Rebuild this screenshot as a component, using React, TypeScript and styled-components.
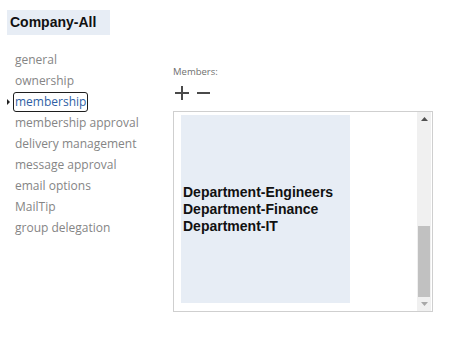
import styled, { createGlobalStyle } from "styled-components";

const navItems = [
  "general",
  "ownership",
  "membership",
  "membership approval",
  "delivery management",
  "message approval",
  "email options",
  "MailTip",
  "group delegation",
];

const members = ["Department-Engineers", "Department-Finance", "Department-IT"];

const GlobalStyle = createGlobalStyle`
  body {
    margin: 0;
    background: #ffffff;
    font-family: "Open Sans", "Noto Sans", sans-serif;
  }
`;

function App() {
  return (
    <>
      <GlobalStyle />
      <Page>
        <Title>Company-All</Title>
        <Body>
          <Nav>
            {navItems.map((item) => (
              <NavItem key={item} active={item === "membership"}>
                <NavLabel active={item === "membership"}>{item}</NavLabel>
              </NavItem>
            ))}
          </Nav>
          <Panel>
            <FieldLabel>Members:</FieldLabel>
            <Toolbar>
              <ToolButton aria-label="add">
                <svg width="14" height="14" viewBox="0 0 14 14">
                  <path d="M7 0v14M0 7h14" stroke="#4a4a4a" strokeWidth="2" />
                </svg>
              </ToolButton>
              <ToolButton aria-label="remove">
                <svg width="13" height="14" viewBox="0 0 13 14">
                  <path d="M0 7h13" stroke="#4a4a4a" strokeWidth="2" />
                </svg>
              </ToolButton>
            </Toolbar>
            <ListBox>
              <ListArea>
                <Selection>
                  {members.map((m) => (
                    <Member key={m}>{m}</Member>
                  ))}
                </Selection>
              </ListArea>
              <ScrollBar>
                <ScrollArrow>
                  <svg width="7" height="4" viewBox="0 0 7 4">
                    <path d="M0 4L3.5 0L7 4Z" fill="#505050" />
                  </svg>
                </ScrollArrow>
                <Track>
                  <Thumb />
                </Track>
                <ScrollArrow>
                  <svg width="7" height="4" viewBox="0 0 7 4">
                    <path d="M0 0L3.5 4L7 0Z" fill="#a8a8a8" />
                  </svg>
                </ScrollArrow>
              </ScrollBar>
            </ListBox>
          </Panel>
        </Body>
      </Page>
    </>
  );
}

const Page = styled.div`
  width: 474px;
  height: 342px;
  padding-top: 10px;
  box-sizing: border-box;
`;

const Title = styled.div`
  margin-left: 7px;
  width: 103px;
  height: 25px;
  padding-left: 3px;
  box-sizing: border-box;
  background-color: #e7edf5;
  font-family: "Liberation Sans", Arial, sans-serif;
  font-weight: bold;
  font-size: 14px;
  line-height: 25px;
  color: #111;
`;

const Body = styled.div`
  display: flex;
  margin-top: 14px;
`;

const Nav = styled.ul`
  list-style: none;
  margin: 0;
  padding: 0;
  width: 173px;
`;

const NavItem = styled.li<{ active: boolean }>`
  position: relative;
  height: 21px;
  display: flex;
  align-items: center;
  padding-left: ${(p) => (p.active ? "13px" : "15px")};
  &::before {
    content: "";
    display: ${(p) => (p.active ? "block" : "none")};
    position: absolute;
    left: 7px;
    top: 8px;
    border-left: 3px solid #222;
    border-top: 3px solid transparent;
    border-bottom: 3px solid transparent;
  }
`;

const NavLabel = styled.span<{ active: boolean }>`
  font-size: 12px;
  line-height: 18px;
  color: ${(p) => (p.active ? "#2f5fa5" : "#858585")};
  border: ${(p) => (p.active ? "1.5px solid #1e1e1e" : "none")};
  border-radius: 3px;
  padding: 0 ${(p) => (p.active ? "1px" : "0")};
  white-space: nowrap;
`;

const Panel = styled.div`
  display: flex;
  flex-direction: column;
  padding-top: 17px;
`;

const FieldLabel = styled.div`
  font-size: 9.5px;
  line-height: 12px;
  color: #6f6f6f;
`;

const Toolbar = styled.div`
  display: flex;
  gap: 8px;
  margin-top: 8px;
  padding-left: 2px;
`;

const ToolButton = styled.span`
  display: flex;
  align-items: center;
  height: 14px;
`;

const ListBox = styled.div`
  display: flex;
  width: 260px;
  height: 201px;
  margin-top: 11px;
  border: 1px solid #cfcfcf;
  box-sizing: border-box;
  background: #fff;
`;

const ListArea = styled.div`
  flex: 1;
  padding: 3px 7px;
`;

const Selection = styled.div`
  width: 169px;
  height: 188px;
  background-color: #e7edf5;
  display: flex;
  flex-direction: column;
  justify-content: center;
  padding-left: 2px;
  box-sizing: border-box;
`;

const Member = styled.div`
  font-family: "Liberation Sans", Arial, sans-serif;
  font-weight: bold;
  font-size: 14px;
  line-height: 17px;
  color: #111;
`;

const ScrollBar = styled.div`
  width: 14px;
  margin-right: 1px;
  background: #f0f0f0;
  display: flex;
  flex-direction: column;
`;

const ScrollArrow = styled.div`
  height: 14px;
  display: flex;
  align-items: center;
  justify-content: center;
`;

const Track = styled.div`
  flex: 1;
  display: flex;
  flex-direction: column;
  justify-content: flex-end;
`;

const Thumb = styled.div`
  height: 71px;
  margin: 0 1px;
  background: #c1c1c1;
`;

export default App;
